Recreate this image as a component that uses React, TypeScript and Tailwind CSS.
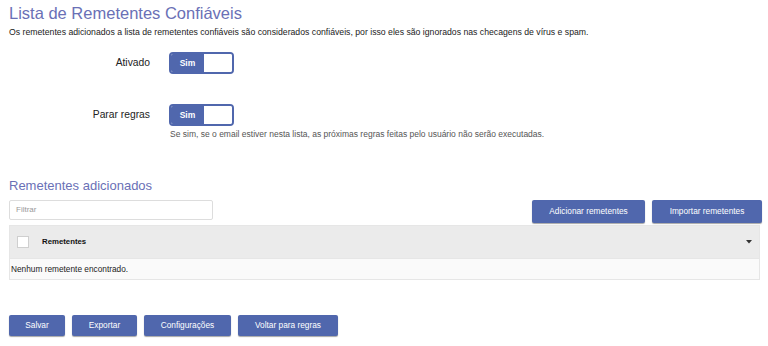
import React from "react";

function Toggle() {
  return (
    <div className="flex h-[22px] w-[65px] rounded-[4px] border-2 border-[#5067ad] bg-white overflow-hidden">
      <div className="flex w-[33px] items-center justify-center bg-[#5067ad] text-[8.5px] font-bold text-white">Sim</div>
      <div className="flex-1 bg-white" />
    </div>
  );
}

function Btn({ children, w }: { children: React.ReactNode; w: string }) {
  return (
    <button className={`${w} h-[21px] rounded-[2px] bg-[#5067ad] text-[8.3px] text-white shadow-[0_1px_1px_rgba(0,0,0,0.35)]`}>
      {children}
    </button>
  );
}

export default function App() {
  return (
    <div className="w-[768px] h-[346px] bg-white overflow-hidden px-[9px] pt-[2px] font-[family-name:'Liberation_Sans',Arial,sans-serif] text-[#333]">
      <h1 className="text-[16.5px] leading-[23px] text-[#6a70b6]">Lista de Remetentes Confiáveis</h1>
      <p className="mt-[1px] text-[8.7px] leading-[12px] text-[#222]">
        Os remetentes adicionados a lista de remetentes confiáveis são considerados confiáveis, por isso eles são ignorados nas checagens de vírus e spam.
      </p>

      <div className="mt-[14px] flex items-center">
        <div className="w-[141px] text-right text-[10.3px] text-[#222]">Ativado</div>
        <div className="ml-[19px]"><Toggle /></div>
      </div>

      <div className="mt-[30px] flex items-center">
        <div className="w-[141px] text-right text-[10.3px] text-[#222]">Parar regras</div>
        <div className="ml-[19px]"><Toggle /></div>
      </div>
      <div className="ml-[161px] mt-[2px] text-[8.5px] leading-[12px] text-[#555]">
        Se sim, se o email estiver nesta lista, as próximas regras feitas pelo usuário não serão executadas.
      </div>

      <h2 className="mt-[37px] text-[13px] leading-[18px] text-[#6a70b6]">Remetentes adicionados</h2>

      <div className="mt-[5px] flex items-start justify-between w-[753px]">
        <div className="h-[20px] w-[204px] rounded-[2px] border border-[#dddddd] bg-white pl-[6px] text-[8px] leading-[18px] text-[#999]">Filtrar</div>
        <div className="flex gap-[7px]">
          <button className="h-[23px] w-[113px] rounded-[2px] bg-[#5067ad] text-[8.3px] text-white shadow-[0_1px_1px_rgba(0,0,0,0.35)]">Adicionar remetentes</button>
          <button className="h-[23px] w-[110px] rounded-[2px] bg-[#5067ad] text-[8.3px] text-white shadow-[0_1px_1px_rgba(0,0,0,0.35)]">Importar remetentes</button>
        </div>
      </div>

      <div className="mt-[2px] w-[751px] border border-[#e6e6e6]">
        <div className="flex h-[32px] items-center bg-[#ebebeb] pl-[7px] pr-[7px]">
          <div className="h-[12px] w-[12px] border border-[#cfcfcf] bg-white" />
          <div className="ml-[13px] text-[7.8px] font-bold text-[#111]">Remetentes</div>
          <div className="ml-auto">
            <svg width="6" height="4" viewBox="0 0 6 4"><path d="M0 0 L6 0 L3 3.5 Z" fill="#333" /></svg>
          </div>
        </div>
        <div className="flex h-[21px] items-center border-t border-[#e6e6e6] bg-[#fafafa] pl-[1px] text-[8.3px] text-[#222]">
          Nenhum remetente encontrado.
        </div>
      </div>

      <div className="mt-[35px] flex gap-[7px]">
        <Btn w="w-[56px]">Salvar</Btn>
        <Btn w="w-[65px]">Exportar</Btn>
        <Btn w="w-[87px]">Configurações</Btn>
        <Btn w="w-[100px]">Voltar para regras</Btn>
      </div>
    </div>
  );
}
